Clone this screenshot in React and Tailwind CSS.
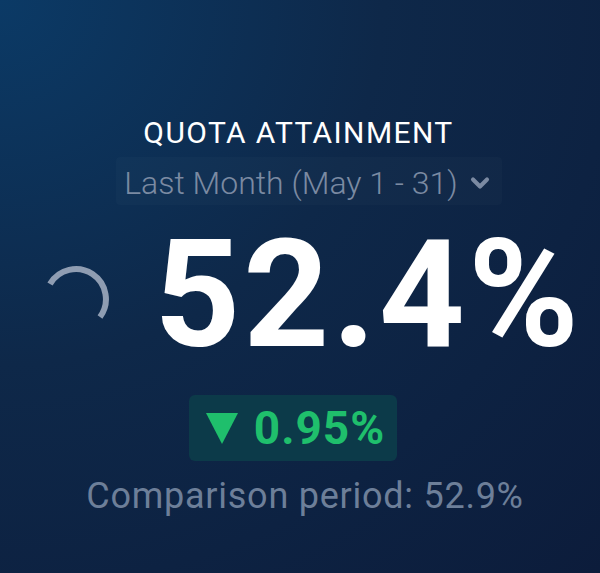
import { ChevronDown } from 'lucide-react'

const Spinner = () => (
  <svg width="64" height="64" viewBox="0 0 64 64" className="shrink-0 mt-[2px]">
    <path
      d="M5 20 A30 30 0 1 1 55 53"
      fill="none"
      stroke="#8f9db2"
      strokeWidth="6"
    />
  </svg>
)

const App = () => {
  return (
    <div
      className="w-[600px] h-[573px] overflow-hidden bg-[radial-gradient(ellipse_at_top_left,#0b3a66_0%,#0e2849_45%,#0c1c3b_100%)] flex flex-col items-center"
      style={{ fontFamily: 'Roboto, "Noto Sans", sans-serif' }}
    >
      <h1 className="mt-[113px] -ml-[3px] text-[30px] leading-[40px] tracking-[1.4px] text-white">QUOTA ATTAINMENT</h1>

      <button className="mt-[4px] ml-[18px] flex items-center gap-2 pl-2 pr-2 pt-[4px] h-[48px] rounded bg-white/[0.02] text-[#7b8aa2]">
        <span className="text-[32px] leading-[40px] font-light">Last Month (May 1 - 31)</span>
        <ChevronDown className="w-7 h-7" strokeWidth={3.5} />
      </button>

      <div className="flex items-center gap-[45px] ml-[27px] mt-[15px]">
        <Spinner />
        <div className="text-[150px] leading-[150px] font-bold text-white tracking-[3px]">52.4%</div>
      </div>

      <div className="mt-[25px] -ml-[14px] flex items-center gap-[16px] pl-[17px] pr-[12px] h-[66px] rounded-md bg-[#0c3a49] text-[#1fbf6c]">
        <svg width="32" height="32" viewBox="0 0 32 32">
          <path d="M0 1 H32 L16 32 Z" fill="#1fbf6c" />
        </svg>
        <span className="text-[46px] font-bold leading-none tracking-[1px]">0.95%</span>
      </div>

      <div className="mt-[17px] ml-[10px] text-[36px] leading-[36px] tracking-[0.75px] text-[#6d7f99]">Comparison period: 52.9%</div>
    </div>
  )
}

export default App
